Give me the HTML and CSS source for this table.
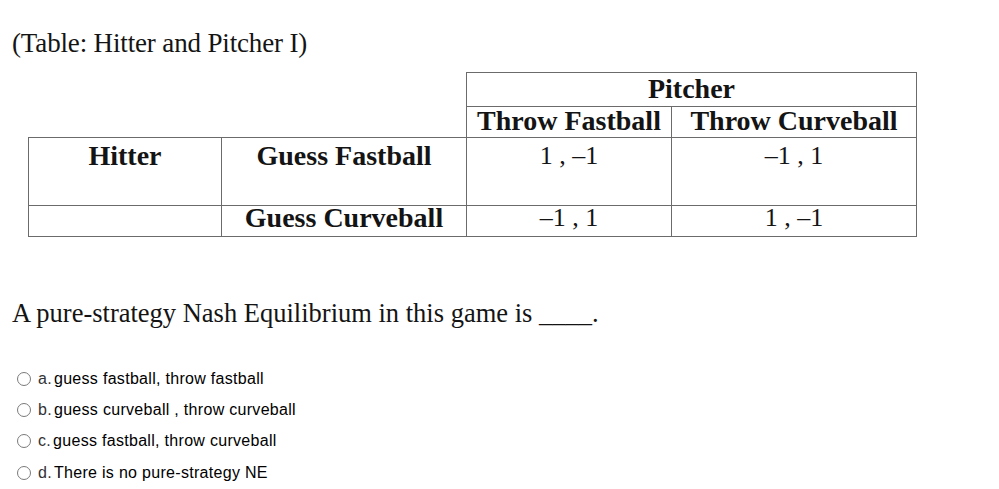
FILE: index.html
```html
<!DOCTYPE html>
<html lang="en">
<head>
<meta charset="utf-8">
<title>Hitter and Pitcher</title>
<link rel="stylesheet" href="styles.css">
</head>
<body>
<p class="title">(Table: Hitter and Pitcher I)</p>

<div class="game">
  <div class="cell blank"></div>
  <div class="cell head pitcher">Pitcher</div>
  <div class="cell head">Throw Fastball</div>
  <div class="cell head">Throw Curveball</div>

  <div class="cell head first r1">Hitter</div>
  <div class="cell head r1">Guess Fastball</div>
  <div class="cell pay r1">1 , –1</div>
  <div class="cell pay r1">–1 , 1</div>

  <div class="cell head first r2"></div>
  <div class="cell head r2">Guess Curveball</div>
  <div class="cell pay r2">–1 , 1</div>
  <div class="cell pay r2">1 , –1</div>
</div>

<p class="question">A pure-strategy Nash Equilibrium in this game is <span class="blank-line">____</span>.</p>

<div class="answers">
  <label class="option"><span class="radio"></span><span class="num">a.</span><span class="text">guess fastball, throw fastball</span></label>
  <label class="option"><span class="radio"></span><span class="num">b.</span><span class="text">guess curveball , throw curveball</span></label>
  <label class="option"><span class="radio"></span><span class="num">c.</span><span class="text">guess fastball, throw curveball</span></label>
  <label class="option"><span class="radio"></span><span class="num">d.</span><span class="text">There is no pure-strategy NE</span></label>
</div>
</body>
</html>
```

FILE: styles.css
```css
html, body {
  margin: 0;
  padding: 0;
  background: #ffffff;
}

body {
  width: 999px;
  font-family: "Liberation Serif", "Times New Roman", serif;
  color: #141414;
}

.title {
  margin: 0;
  padding: 27px 0 0 12px;
  font-size: 27px;
  line-height: 32px;
  letter-spacing: -0.15px;
}

.game {
  margin: 13px 0 0 28px;
  display: grid;
  grid-template-columns: 194px 245px 205px 245px;
  grid-template-rows: 35px 31px 68px 31px;
  width: 889px;
}

.cell {
  box-sizing: border-box;
  border-right: 1px solid #6b6b6b;
  border-bottom: 1px solid #6b6b6b;
  text-align: center;
  font-size: 28px;
  line-height: 28px;
  white-space: nowrap;
}

.blank {
  grid-column: 1 / span 2;
  grid-row: 1 / span 2;
}

.head {
  font-weight: bold;
}

.pitcher {
  grid-column: 3 / span 2;
  border-top: 1px solid #6b6b6b;
  padding-top: 2px;
}

.first {
  border-left: 1px solid #6b6b6b;
}

.r1 {
  padding-top: 4px;
}

.r2 {
  line-height: 24px;
}

.pay {
  font-weight: normal;
  font-size: 26px;
}

.question {
  margin: 60px 0 0 0;
  padding-left: 12px;
  font-size: 26.5px;
  line-height: 32px;
}

.answers {
  margin-top: 34px;
  padding-left: 17px;
  display: flex;
  flex-direction: column;
  font-family: "Liberation Sans", Arial, sans-serif;
  font-size: 16px;
  letter-spacing: 0.3px;
}

.option {
  display: flex;
  align-items: center;
  height: 31.3px;
  line-height: 30px;
  color: #000;
}

.radio {
  box-sizing: border-box;
  width: 14px;
  height: 14px;
  border: 1px solid #7a7a7a;
  border-radius: 50%;
  background: #fff;
  margin-right: 7px;
  flex: none;
}

.num {
  color: #333;
  margin-right: 2px;
}

.text {
  color: #000;
}
```
